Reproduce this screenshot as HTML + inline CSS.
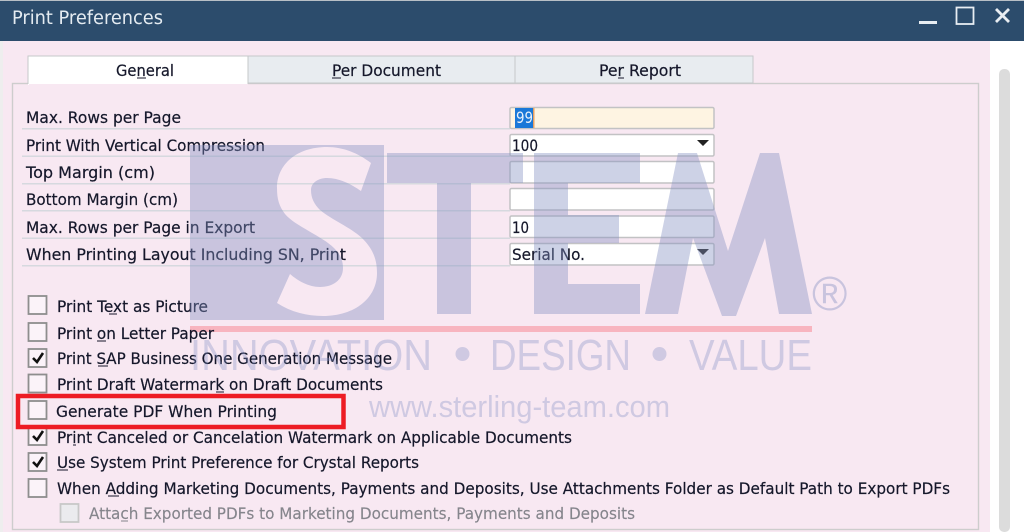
<!DOCTYPE html>
<html><head><meta charset="utf-8"><title>Print Preferences</title>
<style>
html,body{margin:0;padding:0;background:#fff;width:1024px;height:532px;overflow:hidden}
svg{display:block}
text{font-family:"DejaVu Sans",sans-serif;white-space:pre}
.t{font-size:15.6px;fill:#14182a;stroke:#14182a;stroke-width:.2px}
.g{font-size:15.6px;fill:#85858c;stroke:#85858c;stroke-width:.15px}
.w{font-family:"Liberation Sans",sans-serif;fill:rgb(130,142,192);fill-opacity:.34}
</style></head><body>
<svg width="1024" height="532" viewBox="0 0 1024 532" xmlns="http://www.w3.org/2000/svg">
<defs><filter id="b" x="-5%" y="-5%" width="110%" height="110%"><feGaussianBlur stdDeviation="0.35"/></filter></defs>
<rect width="1024" height="532" fill="#fff"/>
<rect x="3" y="41" width="987" height="491" fill="#f8e8f2"/>
<rect x="0" y="41" width="3" height="491" fill="#eeeeee"/>
<rect x="0" y="0" width="1024" height="1" fill="#b8bfc6"/>
<rect x="0" y="1" width="1024" height="40" fill="#2c4c6c"/>
<rect x="999" y="69" width="11" height="463" rx="5" fill="#dcdcdc"/>
<!-- frame -->
<rect x="12.5" y="83.5" width="966" height="446" fill="none" stroke="#cdcdcd" stroke-width="1.4"/>
<!-- tabs -->
<rect x="248" y="56" width="267" height="27" fill="#e8ecf0" stroke="#c6c8ca"/>
<rect x="515" y="56" width="238" height="27" fill="#e8ecf0" stroke="#c6c8ca"/>
<rect x="28" y="56" width="220" height="29" fill="#fff"/>
<path d="M28 84V56H248V84" fill="none" stroke="#c6c8ca"/>
<rect x="29" y="84" width="219" height="2" fill="#f8e8f2"/>
<!-- separators -->
<g fill="#d6d9df">
<rect x="22" y="128" width="488" height="1.5"/><rect x="22" y="155.5" width="488" height="1.5"/>
<rect x="22" y="183" width="488" height="1.5"/><rect x="22" y="210" width="488" height="1.5"/>
<rect x="22" y="237.5" width="488" height="1.5"/><rect x="22" y="265" width="488" height="1.5"/>
</g>
<!-- inputs -->
<g stroke="#c2c2c4" stroke-width="1.5">
<rect x="510" y="107.5" width="204" height="21" rx="1.5" fill="#fef4e2"/>
<rect x="510" y="134.5" width="204" height="21.5" rx="1.5" fill="#fff"/>
<rect x="510" y="161.5" width="204" height="21.5" rx="1.5" fill="#fff"/>
<rect x="510" y="188.5" width="204" height="21.5" rx="1.5" fill="#fff"/>
<rect x="510" y="216" width="204" height="21.5" rx="1.5" fill="#fff"/>
<rect x="510" y="243.5" width="204" height="21.5" rx="1.5" fill="#fff"/>
</g>
<rect x="515" y="108" width="18" height="20" fill="#1a78d8"/>
<rect x="533" y="108" width="1.5" height="20" fill="#e8a060"/>
<path d="M697 140h12l-6 6z M697 249h12l-6 6z" fill="#222"/>
<!-- pink rule sits beneath the text -->
<rect x="190" y="326" width="622" height="6" fill="#f8b4bf" filter="url(#b)"/>
<!-- checkboxes -->
<g fill="#fbf3f9" stroke="#8e8e8e" stroke-width="1.8">
<rect x="28.5" y="296" width="18" height="18"/>
<rect x="28.5" y="323" width="18" height="18"/>
<rect x="28.5" y="349" width="18" height="18"/>
<rect x="28.5" y="374.500" width="18" height="18"/>
<rect x="28.5" y="401" width="18" height="18"/>
<rect x="28.5" y="427" width="18" height="18"/>
<rect x="28.5" y="453" width="18" height="18"/>
<rect x="28.5" y="479" width="18" height="18"/>
</g>
<rect x="60.500" y="504" width="18" height="18" fill="#ebebee" stroke="#c8c8c8" stroke-width="1.800"/>
<g fill="none" stroke="#111" stroke-width="2.600">
<path d="M33 358l4 4 6-9"/><path d="M33 436l4 4 6-9"/><path d="M33 462l4 4 6-9"/>
</g>
<!-- text -->
<g filter="url(#b)">
<text x="12" y="24" font-size="18.500" fill="#e4ebf1" textLength="151" lengthAdjust="spacingAndGlyphs">Print Preferences</text>
<text class="t" x="116" y="76" textLength="58" lengthAdjust="spacingAndGlyphs">General</text>
<text class="t" x="332" y="76" textLength="109" lengthAdjust="spacingAndGlyphs">Per Document</text>
<text class="t" x="599" y="76" textLength="82" lengthAdjust="spacingAndGlyphs">Per Report</text>
<text class="t" x="26" y="123" textLength="155" lengthAdjust="spacingAndGlyphs">Max. Rows per Page</text>
<text class="t" x="26" y="151" textLength="239" lengthAdjust="spacingAndGlyphs">Print With Vertical Compression</text>
<text class="t" x="26" y="178" textLength="129" lengthAdjust="spacingAndGlyphs">Top Margin (cm)</text>
<text class="t" x="26" y="205" textLength="152" lengthAdjust="spacingAndGlyphs">Bottom Margin (cm)</text>
<text class="t" x="26" y="233" textLength="229" lengthAdjust="spacingAndGlyphs">Max. Rows per Page in Export</text>
<text class="t" x="26" y="260" textLength="320" lengthAdjust="spacingAndGlyphs">When Printing Layout Including SN, Print</text>
<text x="516" y="123" font-size="15.600" fill="#e8f0fa" textLength="17" lengthAdjust="spacingAndGlyphs">99</text>
<text class="t" x="512" y="151" textLength="26" lengthAdjust="spacingAndGlyphs">100</text>
<text class="t" x="512" y="233" textLength="17" lengthAdjust="spacingAndGlyphs">10</text>
<text class="t" x="512" y="260" textLength="73" lengthAdjust="spacingAndGlyphs">Serial No.</text>
<text class="t" x="57" y="312" textLength="151" lengthAdjust="spacingAndGlyphs">Print Text as Picture</text>
<text class="t" x="57" y="339" textLength="157" lengthAdjust="spacingAndGlyphs">Print on Letter Paper</text>
<text class="t" x="57" y="364" textLength="335" lengthAdjust="spacingAndGlyphs">Print SAP Business One Generation Message</text>
<text class="t" x="57" y="390" textLength="326" lengthAdjust="spacingAndGlyphs">Print Draft Watermark on Draft Documents</text>
<text class="t" x="56" y="417" textLength="221" lengthAdjust="spacingAndGlyphs">Generate PDF When Printing</text>
<text class="t" x="57" y="443" textLength="515" lengthAdjust="spacingAndGlyphs">Print Canceled or Cancelation Watermark on Applicable Documents</text>
<text class="t" x="57" y="468" textLength="362" lengthAdjust="spacingAndGlyphs">Use System Print Preference for Crystal Reports</text>
<text class="t" x="57" y="494" textLength="893" lengthAdjust="spacingAndGlyphs">When Adding Marketing Documents, Payments and Deposits, Use Attachments Folder as Default Path to Export PDFs</text>
<text class="g" x="89" y="519" textLength="546" lengthAdjust="spacingAndGlyphs">Attach Exported PDFs to Marketing Documents, Payments and Deposits</text>
<!-- accelerators -->
<g fill="#14182a">
<rect x="137" y="77.500" width="9" height="1"/><rect x="332" y="77.500" width="9" height="1"/><rect x="618" y="77.500" width="6" height="1"/>
<rect x="109" y="313.500" width="8" height="1"/><rect x="97" y="340.500" width="9" height="1"/><rect x="98" y="365.500" width="10" height="1"/>
<rect x="216" y="391.500" width="8" height="1"/><rect x="73" y="444.500" width="3" height="1"/><rect x="57" y="469.500" width="11" height="1"/><rect x="108" y="495.500" width="11" height="1"/>
</g>
<rect x="121" y="520.500" width="7" height="1" fill="#85858c"/>
</g>
<!-- window buttons -->
<rect x="919" y="21" width="18" height="3" fill="#e8edf2"/>
<rect x="956.500" y="7.500" width="17" height="16.500" fill="none" stroke="#e8edf2" stroke-width="1.800"/>
<path d="M996 9l13 13M1009 9l-13 13" stroke="#e8edf2" stroke-width="2.800" fill="none"/>
<!-- watermark -->
<g filter="url(#b)">
<path fill="rgb(130,142,192)" fill-opacity=".4" fill-rule="evenodd" d="M190 145H384V320H190Z M371 163C358 153 343 147 327 147C296 147 277 165 277 188C277 199 279 206 285 214C295 226 322 236 334 248C340 254 343 260 343 268C343 280 333 287 320 287C309 287 298 281 290 274L277 303C291 312 307 316 323 316C355 316 377 298 377 273C377 258 372 248 362 238C350 227 332 220 320 210C314 204 311 198 311 190C311 183 318 178 327 178C339 178 351 184 361 191Z"/>
<path fill="rgb(130,142,192)" fill-opacity=".4" d="M387 153H523V183H471V314H437V183H387Z"/>
<path fill="rgb(130,142,192)" fill-opacity=".4" d="M534 153H640V183H568V215H619V243H568V284H640V314H534Z"/>
<path fill="rgb(130,142,192)" fill-opacity=".4" d="M645 314L678 153H697L728 251L760 153H779L812 314H779L765 238L736 316H722L693 238L678 314Z"/>
<text class="w" x="190" y="370" font-size="44" textLength="242" lengthAdjust="spacingAndGlyphs">INNOVATION</text>
<circle cx="462.500" cy="354" r="7" fill="rgb(130,142,192)" fill-opacity=".34"/>
<text class="w" x="490" y="370" font-size="44" textLength="141" lengthAdjust="spacingAndGlyphs">DESIGN</text>
<circle cx="659.500" cy="354" r="7" fill="rgb(130,142,192)" fill-opacity=".34"/>
<text class="w" x="689" y="370" font-size="44" textLength="123" lengthAdjust="spacingAndGlyphs">VALUE</text>
<text class="w" x="369" y="417" font-size="31" textLength="301" lengthAdjust="spacingAndGlyphs">www.sterling-team.com</text>
<text class="w" x="812" y="310" font-size="48" style="fill-opacity:.4">®</text>
</g>
<!-- red box -->
<rect x="18" y="396" width="325.500" height="31" fill="none" stroke="#ed1c24" stroke-width="4.500"/>
</svg>
</body></html>
